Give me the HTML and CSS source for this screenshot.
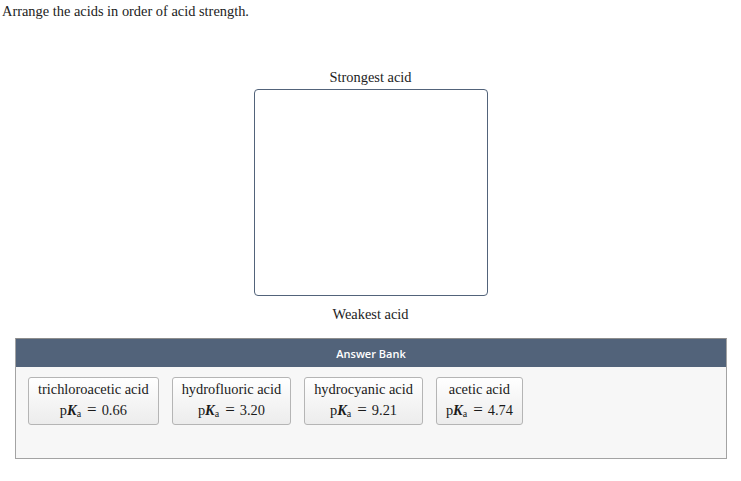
FILE: index.html
```html
<!DOCTYPE html>
<html lang="en">

<head>
    <meta charset="UTF-8">
    <meta name="viewport" content="width=device-width, initial-scale=1.0">
    <title>Acid strength</title>

    <link rel="stylesheet" href="styles.css">
</head>

<body>
    <p class="prompt">Arrange the acids in order of acid strength.</p>

    <div class="ranking">
        <div class="rank-label">Strongest acid</div>
        <div class="drop-zone"></div>
        <div class="rank-label rank-label-bottom">Weakest acid</div>
    </div>

    <div class="answer-bank">
        <div class="bank-header">Answer Bank</div>
        <div class="bank-body">
            <div class="acid-card">
                <div>trichloroacetic acid</div>
                <div class="pka">p<i>K</i><sub>a</sub><span class="eq">=</span>0.66</div>
            </div>
            <div class="acid-card">
                <div>hydrofluoric acid</div>
                <div class="pka">p<i>K</i><sub>a</sub><span class="eq">=</span>3.20</div>
            </div>
            <div class="acid-card">
                <div>hydrocyanic acid</div>
                <div class="pka">p<i>K</i><sub>a</sub><span class="eq">=</span>9.21</div>
            </div>
            <div class="acid-card">
                <div>acetic acid</div>
                <div class="pka">p<i>K</i><sub>a</sub><span class="eq">=</span>4.74</div>
            </div>
        </div>
    </div>
</body>

</html>
```

FILE: styles.css
```css
body {
    font-family: "Liberation Serif", "Times New Roman", serif;
    font-size: 14.4px;
    color: #222222;
    margin: 0;
    padding: 0;
}

.prompt {
    margin: 0;
    padding: 4px 2px;
    line-height: 15px;
}

.ranking {
    display: flex;
    flex-direction: column;
    align-items: center;
    margin-top: 47px;
}

.rank-label {
    line-height: 15px;
    margin-bottom: 4px;
}

.rank-label-bottom {
    margin-top: 11px;
    margin-bottom: 0;
}

.drop-zone {
    width: 234px;
    height: 207px;
    border: 1px solid #52637a;
    border-radius: 4px;
    box-sizing: border-box;
    background-color: #ffffff;
}

.answer-bank {
    margin: 16px 14px 0 15px;
    border: 1px solid #a3a3a3;
    border-top-color: #8d8d8d;
}

.bank-header {
    height: 28px;
    line-height: 28px;
    padding-top: 1px;
    box-sizing: border-box;
    background-color: #52637a;
    color: #ffffff;
    text-align: center;
    font-family: "Open Sans", "Liberation Sans", sans-serif;
    font-size: 11px;
    font-weight: 600;
}

.bank-body {
    display: flex;
    align-items: flex-start;
    gap: 13px;
    padding: 10px 12px 33px;
    background-color: #f7f7f7;
}

.acid-card {
    text-align: center;
    padding: 4px 9px 6px;
    line-height: 15px;
    border: 1px solid #b5b5b5;
    border-radius: 3px;
    background: linear-gradient(#ffffff, #ececec);
    color: #1a1a1a;
}

.pka {
    margin-top: 6px;
}

.pka i {
    font-weight: bold;
}

.pka sub {
    font-size: 10px;
    line-height: 0;
    vertical-align: -2px;
}

/* the equals sign is drawn a little larger, like a math font */
.pka .eq {
    font-size: 17px;
    line-height: 0;
    margin: 0 5px 0 6px;
}
```
